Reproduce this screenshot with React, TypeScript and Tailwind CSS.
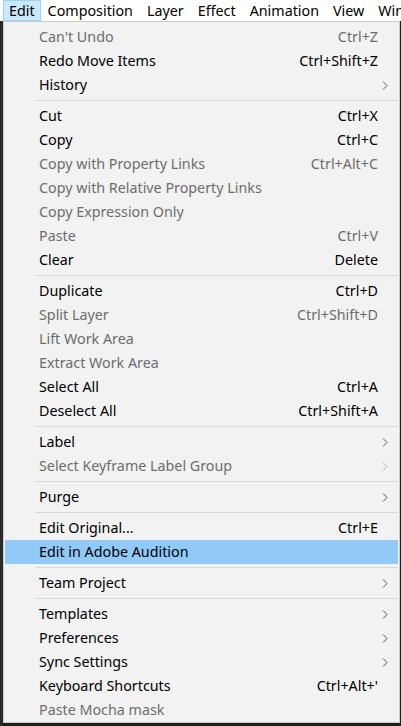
import React from "react";

type Item =
  | { sep: true }
  | { sep?: false; label: string; shortcut?: string; sub?: boolean; disabled?: boolean; active?: boolean };

const items: Item[] = [
  { label: "Can't Undo", shortcut: "Ctrl+Z", disabled: true },
  { label: "Redo Move Items", shortcut: "Ctrl+Shift+Z" },
  { label: "History", sub: true },
  { sep: true },
  { label: "Cut", shortcut: "Ctrl+X" },
  { label: "Copy", shortcut: "Ctrl+C" },
  { label: "Copy with Property Links", shortcut: "Ctrl+Alt+C", disabled: true },
  { label: "Copy with Relative Property Links", disabled: true },
  { label: "Copy Expression Only", disabled: true },
  { label: "Paste", shortcut: "Ctrl+V", disabled: true },
  { label: "Clear", shortcut: "Delete" },
  { sep: true },
  { label: "Duplicate", shortcut: "Ctrl+D" },
  { label: "Split Layer", shortcut: "Ctrl+Shift+D", disabled: true },
  { label: "Lift Work Area", disabled: true },
  { label: "Extract Work Area", disabled: true },
  { label: "Select All", shortcut: "Ctrl+A" },
  { label: "Deselect All", shortcut: "Ctrl+Shift+A" },
  { sep: true },
  { label: "Label", sub: true },
  { label: "Select Keyframe Label Group", sub: true, disabled: true },
  { sep: true },
  { label: "Purge", sub: true },
  { sep: true },
  { label: "Edit Original...", shortcut: "Ctrl+E" },
  { label: "Edit in Adobe Audition", active: true },
  { sep: true },
  { label: "Team Project", sub: true },
  { sep: true },
  { label: "Templates", sub: true },
  { label: "Preferences", sub: true },
  { label: "Sync Settings", sub: true },
  { label: "Keyboard Shortcuts", shortcut: "Ctrl+Alt+'" },
  { label: "Paste Mocha mask", disabled: true },
];

function Chevron({ disabled }: { disabled?: boolean }) {
  return (
    <svg width="6" height="9" viewBox="0 0 6 9" className="-mr-[10px]">
      <polyline points="1,0.5 5,4.5 1,8.5" fill="none" stroke={disabled ? "#b0b0b0" : "#555"} strokeWidth="1" />
    </svg>
  );
}

export default function App() {
  return (
    <div
      className="w-[401px] h-[726px] bg-[#1e1e1e] flex flex-col overflow-hidden text-[14.3px] leading-none"
      style={{ fontFamily: '"Noto Sans", "Open Sans", sans-serif' }}
    >
      <div className="h-[21px] bg-white flex items-stretch text-black whitespace-nowrap overflow-hidden">
        <div className="ml-[3px] px-[5px] pt-px bg-[#cce8ff] border border-[#99d1ff] flex items-center">Edit</div>
        <div className="px-[7px] pt-px flex items-center">Composition</div>
        <div className="px-[7px] pt-px flex items-center">Layer</div>
        <div className="px-[7px] pt-px flex items-center">Effect</div>
        <div className="px-[7px] pt-px flex items-center">Animation</div>
        <div className="px-[7px] pt-px flex items-center">View</div>
        <div className="px-[7px] pt-px flex items-center">Window</div>
      </div>
      <div className="flex flex-1 min-h-0">
        <div className="w-[3px] bg-[#2a2a2a]" />
        <div className="w-[397px] h-[702px] bg-[#f2f2f2] border border-[#cccccc] pt-[3px] flex flex-col">
          {items.map((it, i) =>
            it.sep ? (
              <div key={i} className="h-[7px] flex items-center pl-[31px] pr-[1px]">
                <div className="h-px w-full bg-[#d7d7d7]" />
              </div>
            ) : (
              <div
                key={i}
                className={
                  "h-[24px] mx-[1px] pl-[34px] pr-[20px] flex items-center justify-between whitespace-nowrap " +
                  (it.active ? "bg-[#91c9f7] " : "") +
                  (it.disabled ? "text-[#6d6d6d]" : "text-black")
                }
              >
                <span>{it.label}</span>
                {it.shortcut ? <span>{it.shortcut}</span> : it.sub ? <Chevron disabled={it.disabled} /> : null}
              </div>
            )
          )}
        </div>
      </div>
    </div>
  );
}
